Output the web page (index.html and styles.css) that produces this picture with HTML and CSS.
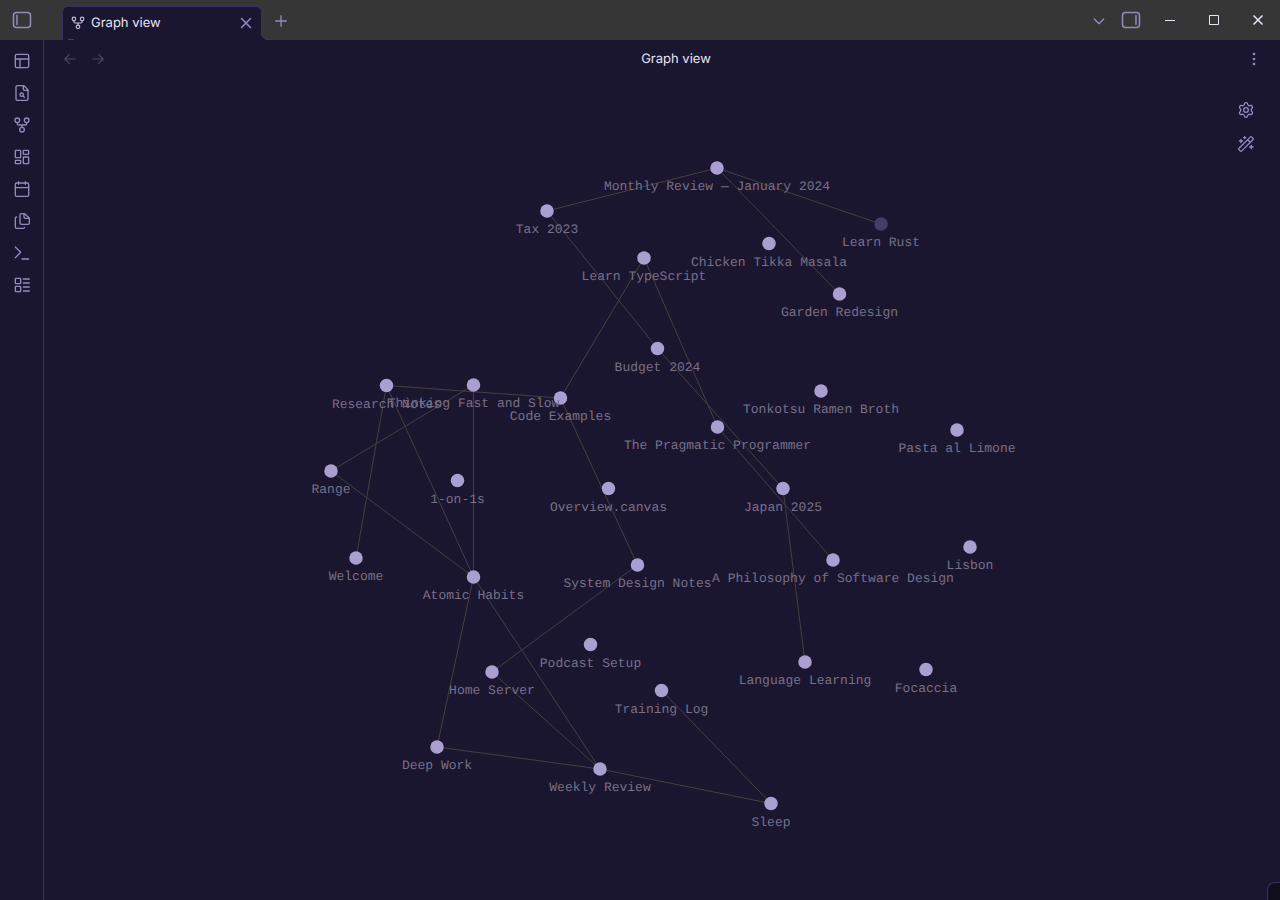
FILE: index.html
```
<!doctype html>
<html lang="en">

  <head>
    <meta charset="utf-8">
    <meta name="viewport" content="width=device-width, initial-scale=1">
    <title>Graph view</title>
    <link rel="stylesheet" href="styles.css">
    <script src="graph.js" defer></script>
  </head>

  <body>
    <header class="titlebar">
      <button class="toggle toggle-left" aria-label="Toggle left sidebar">
        <svg class="panel-icon" viewBox="0 0 20 18"><rect x="1.5" y="1.5" width="17" height="15" rx="3"/><path d="M5 4.5v9"/></svg>
      </button>
      <div class="tab">
        <svg class="tab-icon" viewBox="0 0 24 24"><circle cx="12" cy="18.500" r="3"/><circle cx="5" cy="5" r="3"/><circle cx="19" cy="5" r="3"/><path d="M19 8v2a2 2 0 0 1-2 2H7a2 2 0 0 1-2-2V8M12 12v3"/></svg>
        <span class="tab-title">Graph view</span>
        <button class="tab-close" aria-label="Close tab">
          <svg viewBox="0 0 24 24"><path d="M18 6 6 18M6 6l12 12"/></svg>
        </button>
      </div>
      <button class="new-tab" aria-label="New tab">
        <svg viewBox="0 0 24 24"><path d="M4 12h16M12 4v16"/></svg>
      </button>
      <div class="window-tools">
        <button class="tab-list" aria-label="Tab list">
          <svg viewBox="0 0 24 24"><path d="m5 9 7 7 7-7"/></svg>
        </button>
        <button class="toggle toggle-right" aria-label="Toggle right sidebar">
          <svg class="panel-icon" viewBox="0 0 20 18"><rect x="1.5" y="1.5" width="17" height="15" rx="3"/><path d="M15 4.5v9"/></svg>
        </button>
        <button class="window-button" aria-label="Minimize">
          <svg viewBox="0 0 12 12"><path d="M1 6.500h10"/></svg>
        </button>
        <button class="window-button" aria-label="Maximize">
          <svg viewBox="0 0 12 12"><path d="M1.500 1.500h9v9h-9z"/></svg>
        </button>
        <button class="window-button window-close" aria-label="Close window">
          <svg viewBox="0 0 12 12"><path d="m1.500 1.500 9 9M10.500 1.500l-9 9"/></svg>
        </button>
      </div>
    </header>

    <div class="workspace">
      <nav class="ribbon" aria-label="Ribbon">
        <button aria-label="Open layout">
          <svg viewBox="0 0 24 24"><rect x="2" y="2" width="20" height="20" rx="2"/><path d="M2 9h20M9 22V9"/></svg>
        </button>
        <button aria-label="Open quick switcher">
          <svg viewBox="0 0 24 24"><path d="M15 1H5a2 2 0 0 0-2 2v18a2 2 0 0 0 2 2h14a2 2 0 0 0 2-2V7z"/><path d="M14 1v5a2 2 0 0 0 2 2h5"/><circle cx="11.500" cy="14.500" r="2.500"/><path d="m13.300 16.300 2.200 2.200"/></svg>
        </button>
        <button aria-label="Open graph view">
          <svg viewBox="0 0 24 24"><circle cx="12" cy="19" r="3.500"/><circle cx="5" cy="5" r="3.500"/><circle cx="19" cy="5" r="3.500"/><path d="M19 8.500V10a2 2 0 0 1-2 2H7a2 2 0 0 1-2-2V8.500M12 12v3.500"/></svg>
        </button>
        <button aria-label="Create new canvas">
          <svg viewBox="0 0 24 24"><rect x="2" y="2" width="8" height="11" rx="1"/><rect x="14" y="2" width="8" height="6" rx="1"/><rect x="14" y="12" width="8" height="10" rx="1"/><rect x="2" y="17" width="8" height="5" rx="1"/></svg>
        </button>
        <button aria-label="Open daily note">
          <svg viewBox="0 0 24 24"><rect x="2" y="3" width="20" height="20" rx="2"/><path d="M7 1v4M17 1v4M2 10h20"/></svg>
        </button>
        <button aria-label="Insert template">
          <svg viewBox="0 0 24 24"><path d="M16 1h-5a2 2 0 0 0-2 2v12a2 2 0 0 0 2 2h10a2 2 0 0 0 2-2V8z"/><path d="M15 1v5a2 2 0 0 0 2 2h6M4 6a2 2 0 0 0-2 2v13a2 2 0 0 0 2 2h10a2 2 0 0 0 2-1.500"/></svg>
        </button>
        <button aria-label="Open command palette">
          <svg viewBox="0 0 24 24"><path d="m2 19 8-8-8-8M12 21h10"/></svg>
        </button>
        <button aria-label="Create new base">
          <svg viewBox="0 0 24 24"><rect x="2" y="2" width="8" height="8" rx="1"/><rect x="2" y="14" width="8" height="8" rx="1"/><path d="M14 3h9M14 9h9M14 15h9M14 21h9"/></svg>
        </button>
      </nav>

      <main class="view">
        <div class="view-header">
          <div class="view-nav">
            <button disabled aria-label="Navigate back">
              <svg viewBox="0 0 24 24"><path d="m11 4-8 8 8 8M3 12h18"/></svg>
            </button>
            <button disabled aria-label="Navigate forward">
              <svg viewBox="0 0 24 24"><path d="m13 4 8 8-8 8M21 12H3"/></svg>
            </button>
          </div>
          <h1 class="view-title">Graph view</h1>
          <button class="view-more" aria-label="More options">
            <svg viewBox="0 0 16 16"><circle cx="8" cy="3" r="1.300"/><circle cx="8" cy="8" r="1.300"/><circle cx="8" cy="13" r="1.300"/></svg>
          </button>
        </div>

        <div class="graph">
          <svg id="graph" class="graph-canvas" viewBox="44 78 1236 822" role="img" aria-label="Graph of linked notes"></svg>
          <div class="graph-controls">
            <button aria-label="Open graph settings">
              <svg viewBox="0 0 24 24"><path d="M12 1c1.400 0 2.300 1 2.500 2.300.3 1.700 2 2.700 3.700 2.100 1.300-.5 2.600-.1 3.200 1.100.7 1.200.4 2.500-.6 3.400-1.300 1.100-1.300 3.100 0 4.200 1 .9 1.300 2.200.6 3.400-.6 1.200-1.900 1.600-3.200 1.100-1.700-.6-3.400.4-3.700 2.100C14.300 22 13.400 23 12 23s-2.300-1-2.500-2.300c-.3-1.700-2-2.700-3.700-2.100-1.300.5-2.600.1-3.200-1.100-.7-1.200-.4-2.500.6-3.400 1.300-1.100 1.300-3.100 0-4.200-1-.9-1.300-2.200-.6-3.400.6-1.200 1.900-1.600 3.200-1.100 1.700.6 3.400-.4 3.700-2.100C9.700 2 10.600 1 12 1z"/><circle cx="12" cy="12" r="3.500"/></svg>
            </button>
            <button aria-label="Start timelapse animation">
              <svg viewBox="0 0 24 24"><path d="m22.300 3.200-1.500-1.500a1.800 1.800 0 0 0-2.500 0L1.700 18.300a1.800 1.800 0 0 0 0 2.500l1.500 1.500a1.800 1.800 0 0 0 2.500 0L22.300 5.700a1.800 1.800 0 0 0 0-2.500zM14.500 5.500l4 4M4.500 5v5M2 7.500h5M10 1v3M8.500 2.500h3M20 14v5M17.500 16.500h5"/></svg>
            </button>
          </div>
        </div>
      </main>
    </div>
    <div class="status-bar"></div>
  </body>
</html>
```
FILE: styles.css
```
* {
  box-sizing: border-box;
}

body {
  --bar: #363636;
  --base: #1b1630;
  --line: #392e65;
  --icon: #958abc;
  --text: #e8e4f8;

  display: flex;
  flex-direction: column;
  height: 100vh;
  margin: 0;
  overflow: hidden;
  background: var(--base);
  color: var(--text);
  font-family: Inter, sans-serif;
  font-size: 13px;
  text-rendering: geometricPrecision;
}

button {
  display: flex;
  align-items: center;
  justify-content: center;
  flex: none;
  padding: 0;
  border: 0;
  background: none;
  color: var(--icon);
}

button svg,
.tab-icon {
  width: 16px;
  height: 16px;
  fill: none;
  stroke: currentColor;
  stroke-width: 2;
  stroke-linecap: round;
  stroke-linejoin: round;
}

/* title bar */
.titlebar {
  display: flex;
  flex: none;
  align-items: center;
  height: 40px;
  background: var(--bar);
  box-shadow: inset 0 -1px var(--line);
}

.toggle {
  width: 44px;
  height: 40px;
}

.toggle-right {
  width: 34px;
}

.toggle .panel-icon {
  width: 20px;
  height: 18px;
  stroke-width: 1.5;
}

.tab {
  position: relative;
  display: flex;
  align-items: center;
  align-self: flex-end;
  width: 200px;
  height: 34px;
  margin-left: 18px;
  padding: 0 6px 2px 8px;
  border: 1px solid var(--line);
  border-bottom: 0;
  border-radius: 6px 6px 0 0;
  background: var(--base);
}

.tab::before {
  content: "";
  position: absolute;
  left: 5px;
  bottom: 0;
  width: 6px;
  height: 1px;
  background: #38406c;
}

/* curve from the tab into the bar */
.tab::after {
  content: "";
  position: absolute;
  right: -7px;
  bottom: 0;
  width: 7px;
  height: 7px;
  background: radial-gradient(circle at 100% 0, var(--bar) 6px, var(--line) 6px, var(--line) 7px, var(--base) 7px);
}

.tab-icon {
  width: 14px;
  height: 14px;
  margin-right: 6px;
  color: #c4bddd;
}

.tab-title {
  flex: 1;
  line-height: 20px;
}

.tab-close svg {
  width: 18px;
  height: 18px;
}

.new-tab {
  width: 38px;
  height: 40px;
  padding-top: 2px;
}

.window-tools {
  display: flex;
  margin-left: auto;
}

.tab-list {
  width: 30px;
  padding-top: 1px;
}

.window-button {
  width: 44px;
  height: 40px;
  color: var(--text);
}

.window-button svg {
  width: 12px;
  height: 12px;
  stroke-width: 1;
  stroke-linecap: butt;
  stroke-linejoin: miter;
}

.window-close svg {
  stroke-width: 1.5;
}

/* workspace */
.workspace {
  display: flex;
  flex: 1;
  min-height: 0;
}

.ribbon {
  display: flex;
  flex: none;
  flex-direction: column;
  gap: 8px;
  width: 44px;
  padding: 9px 0;
  border-right: 1px solid var(--line);
}

.ribbon button {
  height: 24px;
}

.view {
  display: flex;
  flex: 1;
  flex-direction: column;
  min-width: 0;
}

.view-header {
  display: grid;
  grid-template-columns: 1fr auto 1fr;
  align-items: center;
  flex: none;
  height: 38px;
  padding: 0 16px;
}

.view-nav {
  display: flex;
}

.view-nav button {
  width: 20px;
  opacity: 0.4;
}

.view-nav button + button {
  width: 36px;
}

.view-nav svg {
  width: 14px;
  height: 14px;
}

.view-title {
  margin: 0;
  padding-left: 28px;
  font-size: 13px;
  font-weight: 400;
  line-height: 20px;
}

.view-more {
  justify-self: end;
  width: 20px;
}

.view-more svg {
  fill: currentColor;
  stroke: none;
}

/* graph */
.graph {
  position: relative;
  flex: 1;
  min-height: 0;
}

.graph-canvas {
  display: block;
  width: 100%;
  height: 100%;
}

.graph-controls {
  position: absolute;
  top: 20px;
  right: 22px;
  display: flex;
  flex-direction: column;
  gap: 10px;
}

.graph-controls button {
  width: 24px;
  height: 24px;
}

.link {
  stroke: #424041;
}

.node {
  fill: #a99fd0;
}

.node.unresolved {
  fill: #463d65;
}

.label {
  fill: #777087;
  font-family: "Liberation Mono", monospace;
  font-size: 13px;
  text-anchor: middle;
}

.status-bar {
  position: fixed;
  right: 0;
  bottom: 0;
  width: 13px;
  height: 18px;
  border: solid var(--line);
  border-width: 1px 0 0 1px;
  border-radius: 8px 0 0 0;
  background: #120f1c;
}
```
FILE: graph.js
```
const notes = {
  'Monthly Review — January 2024': [717, 168],
  'Tax 2023': [547, 211],
  'Learn Rust': [881, 224],
  'Chicken Tikka Masala': [769, 243.5],
  'Learn TypeScript': [644, 258],
  'Garden Redesign': [839.5, 294],
  'Budget 2024': [657.5, 348.5],
  'Research Notes': [386.5, 385.5],
  'Thinking Fast and Slow': [473.5, 385],
  'Code Examples': [560.5, 398],
  'Tonkotsu Ramen Broth': [821, 391],
  'The Pragmatic Programmer': [717.5, 427],
  'Pasta al Limone': [957, 430],
  'Range': [331, 471],
  '1-on-1s': [457.5, 480.5],
  'Overview.canvas': [608.5, 488.5],
  'Japan 2025': [783, 488.5],
  'Welcome': [356, 558],
  'Atomic Habits': [473.5, 577],
  'System Design Notes': [637.5, 565],
  'A Philosophy of Software Design': [833, 560],
  'Lisbon': [970, 547],
  'Podcast Setup': [590.5, 644.5],
  'Home Server': [492, 672],
  'Training Log': [661.5, 690.5],
  'Language Learning': [805, 662],
  'Focaccia': [926, 669.5],
  'Deep Work': [437, 747],
  'Weekly Review': [600, 769],
  'Sleep': [771, 803.5],
};

const links = [
  ['Monthly Review — January 2024', 'Tax 2023'],
  ['Monthly Review — January 2024', 'Learn Rust'],
  ['Monthly Review — January 2024', 'Garden Redesign'],
  ['Tax 2023', 'Budget 2024'],
  ['Budget 2024', 'Japan 2025'],
  ['Learn TypeScript', 'Code Examples'],
  ['Learn TypeScript', 'The Pragmatic Programmer'],
  ['The Pragmatic Programmer', 'A Philosophy of Software Design'],
  ['Japan 2025', 'Language Learning'],
  ['Research Notes', 'Code Examples'],
  ['Research Notes', 'Welcome'],
  ['Research Notes', 'Atomic Habits'],
  ['Thinking Fast and Slow', 'Range'],
  ['Thinking Fast and Slow', 'Atomic Habits'],
  ['Range', 'Atomic Habits'],
  ['Code Examples', 'System Design Notes'],
  ['System Design Notes', 'Home Server'],
  ['Atomic Habits', 'Deep Work'],
  ['Atomic Habits', 'Weekly Review'],
  ['Home Server', 'Weekly Review'],
  ['Deep Work', 'Weekly Review'],
  ['Weekly Review', 'Sleep'],
  ['Training Log', 'Sleep'],
];

const unresolved = ['Learn Rust'];
const graph = document.getElementById('graph');

function draw(tag, attributes, text) {
  const element = document.createElementNS('http://www.w3.org/2000/svg', tag);
  Object.keys(attributes).forEach(key => element.setAttribute(key, attributes[key]));
  if (text) element.textContent = text;
  graph.appendChild(element);
}

links.forEach(([from, to]) => {
  const [x1, y1] = notes[from];
  const [x2, y2] = notes[to];
  draw('line', { class: 'link', x1, y1, x2, y2 });
});

Object.keys(notes).forEach(name => {
  const [cx, cy] = notes[name];
  const state = unresolved.includes(name) ? ' unresolved' : '';
  draw('circle', { class: 'node' + state, cx, cy, r: 6.75 });
});

// labels go last so they stay above every node
Object.keys(notes).forEach(name => {
  const [x, y] = notes[name];
  draw('text', { class: 'label', x, y: y + 22 }, name);
});
```
